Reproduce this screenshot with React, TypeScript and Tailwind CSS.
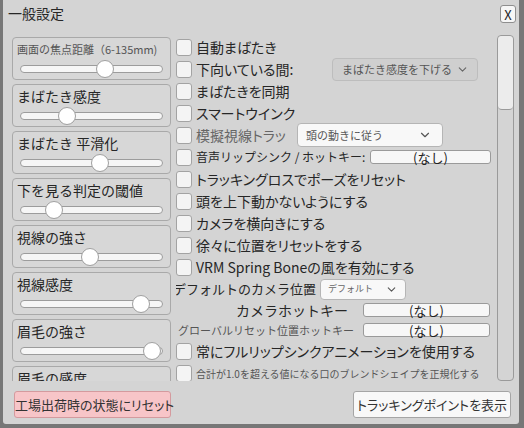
import { ChevronDown } from "lucide-react";

const sliders = [
  { label: "画面の焦点距離（6-135mm)", small: true, pos: 85 },
  { label: "まばたき感度", pos: 47 },
  { label: "まばたき 平滑化", pos: 80 },
  { label: "下を見る判定の閾値", pos: 34 },
  { label: "視線の強さ", pos: 70 },
  { label: "視線感度", pos: 121 },
  { label: "眉毛の強さ", pos: 132 },
  { label: "眉毛の感度", pos: 60 },
];

const Slider = ({ pos }: { pos: number }) => (
  <div className="relative mx-[7px] h-[17px]">
    <div className="absolute left-0 right-0 top-[5px] h-[8px] rounded-full border border-[#9c9c9c] bg-[#f6f6f6]" />
    <div
      className="absolute top-0 h-[18px] w-[18px] rounded-full border border-[#a0a0a0] bg-white"
      style={{ left: pos - 9 }}
    />
  </div>
);

const Check = () => (
  <div className="h-[17px] w-[16px] shrink-0 rounded-[3px] border border-[#a3a3a3] bg-[#f4f4f4]" />
);

// checkbox rows use proportional kana, like the original UI font
const Row = ({ children }: { children: React.ReactNode }) => (
  <div className="flex h-[22px] shrink-0 items-center gap-[4px] whitespace-nowrap [font-feature-settings:'palt']">
    {children}
  </div>
);

const HotKey = ({ w }: { w: string }) => (
  <div
    className={`${w} flex h-[14px] items-center justify-center rounded-[3px] border border-[#9a9a9a] bg-[#f7f7f7] text-[13px] leading-none text-[#222] [font-feature-settings:normal]`}
  >
    (なし)
  </div>
);

export default function App() {
  return (
    <div className="flex h-[428px] w-[524px] bg-[#777777] pb-[4px] pl-[3px] pr-[5px] font-['Noto_Sans_CJK_JP','Noto_Sans',sans-serif] text-[#262626]">
      <div className="flex flex-1 flex-col overflow-hidden rounded-b-[3px] bg-[#d4d4d4]">
        {/* title bar */}
        <div className="flex h-[35px] shrink-0 items-start justify-between">
          <div className="pl-[5px] pt-[3px] text-[14px] leading-[20px]">一般設定</div>
          <button className="mr-[3px] mt-[5px] flex h-[18px] w-[16px] items-center justify-center rounded-[3px] border border-[#8e8e8e] bg-[#f6f6f6] text-[13px] leading-none">
            X
          </button>
        </div>

        {/* body */}
        <div className="flex h-[346px] shrink-0">
          {/* left sliders */}
          <div className="ml-[9px] flex w-[159px] shrink-0 flex-col gap-[4px] overflow-hidden pt-[2px]">
            {sliders.map((s) => (
              <div
                key={s.label}
                className="h-[43px] shrink-0 rounded-[4px] border border-[#a9a9a9] bg-[#d7d7d7] pt-[1px]"
              >
                <div
                  className={
                    s.small
                      ? "h-[21px] whitespace-nowrap pl-[4px] text-[11px] leading-[20px] text-[#555]"
                      : "h-[21px] whitespace-nowrap pl-[4px] text-[14px] leading-[20px]"
                  }
                >
                  {s.label}
                </div>
                <Slider pos={s.pos} />
              </div>
            ))}
          </div>

          {/* middle options */}
          <div className="ml-[5px] flex w-[318px] shrink-0 flex-col overflow-hidden pt-[1px] text-[14px]">
            <Row>
              <Check />
              <span>自動まばたき</span>
            </Row>
            <Row>
              <Check />
              <span className="w-[132px]">下向いている間:</span>
              <div className="flex h-[23px] w-[146px] items-center justify-between rounded-[4px] border border-[#bdbdbd] bg-[#cfcfcf] pl-[9px] pr-[8px] text-[11px] text-[#555] [font-feature-settings:normal]">
                まばたき感度を下げる
                <ChevronDown size={13} className="text-[#666]" />
              </div>
            </Row>
            <Row>
              <Check />
              <span>まばたきを同期</span>
            </Row>
            <Row>
              <Check />
              <span>スマートウインク</span>
            </Row>
            <Row>
              <Check />
              <span className="w-[97px] overflow-hidden text-[#666]">模擬視線トラッ</span>
              <div className="flex h-[24px] w-[146px] items-center justify-between rounded-[4px] border border-[#b5b5b5] bg-[#f8f8f8] pl-[8px] pr-[10px] text-[11px] text-[#555] [font-feature-settings:normal]">
                頭の動きに従う
                <ChevronDown size={14} className="text-[#555]" />
              </div>
            </Row>
            <Row>
              <Check />
              <span className="w-[170px] text-[12px] [font-feature-settings:normal]">音声リップシンク / ホットキー:</span>
              <HotKey w="w-[121px]" />
            </Row>
            <Row>
              <Check />
              <span>トラッキングロスでポーズをリセット</span>
            </Row>
            <Row>
              <Check />
              <span>頭を上下動かないようにする</span>
            </Row>
            <Row>
              <Check />
              <span>カメラを横向きにする</span>
            </Row>
            <Row>
              <Check />
              <span>徐々に位置をリセットをする</span>
            </Row>
            <Row>
              <Check />
              <span>VRM Spring Boneの風を有効にする</span>
            </Row>
            <div className="-ml-[3px] flex h-[22px] shrink-0 items-center whitespace-nowrap">
              <span className="w-[147px] text-[13px]">デフォルトのカメラ位置</span>
              <div className="flex h-[21px] w-[86px] items-center justify-between rounded-[4px] border border-[#b5b5b5] bg-[#f8f8f8] pl-[7px] pr-[7px] text-[9px] text-[#666]">
                デフォルト
                <ChevronDown size={13} className="text-[#555]" />
              </div>
            </div>
            <div className="flex h-[20px] shrink-0 items-center whitespace-nowrap">
              <span className="w-[174px] pr-[2px] text-right">カメラホットキー</span>
              <div className="w-[13px]" />
              <HotKey w="w-[127px]" />
            </div>
            <div className="flex h-[20px] shrink-0 items-center whitespace-nowrap">
              <span className="w-[187px] pl-[2px] text-[11px] text-[#555]">グローバルリセット位置ホットキー</span>
              <HotKey w="w-[127px]" />
            </div>
            <Row>
              <Check />
              <span>常にフルリップシンクアニメーションを使用する</span>
            </Row>
            <Row>
              <Check />
              <span className="text-[10px] text-[#555] [font-feature-settings:normal]">
                合計が1.0を超える値になる口のブレンドシェイプを正規化する
              </span>
            </Row>
          </div>

          {/* scrollbar */}
          <div className="ml-[3px] mr-[5px] flex h-[346px] w-[17px] shrink-0 flex-col rounded-[4px] border border-[#9a9a9a]">
            <div className="h-[74px] rounded-[4px] border-b border-[#9a9a9a] bg-[#ececec]" />
          </div>
        </div>

        {/* footer */}
        <div className="mt-[10px] flex items-start justify-between pl-[11px] pr-[8px] [font-feature-settings:'palt']">
          <button className="h-[27px] w-[157px] whitespace-nowrap rounded-[3px] border border-[#d49a9e] bg-[#f7c5c8] text-[13px] leading-none text-[#333]">
            工場出荷時の状態にリセット
          </button>
          <button className="h-[27px] w-[158px] whitespace-nowrap rounded-[3px] border border-[#a5a5a5] bg-[#f8f8f8] text-[13px] leading-none text-[#333]">
            トラッキングポイントを表示
          </button>
        </div>
      </div>
    </div>
  );
}
